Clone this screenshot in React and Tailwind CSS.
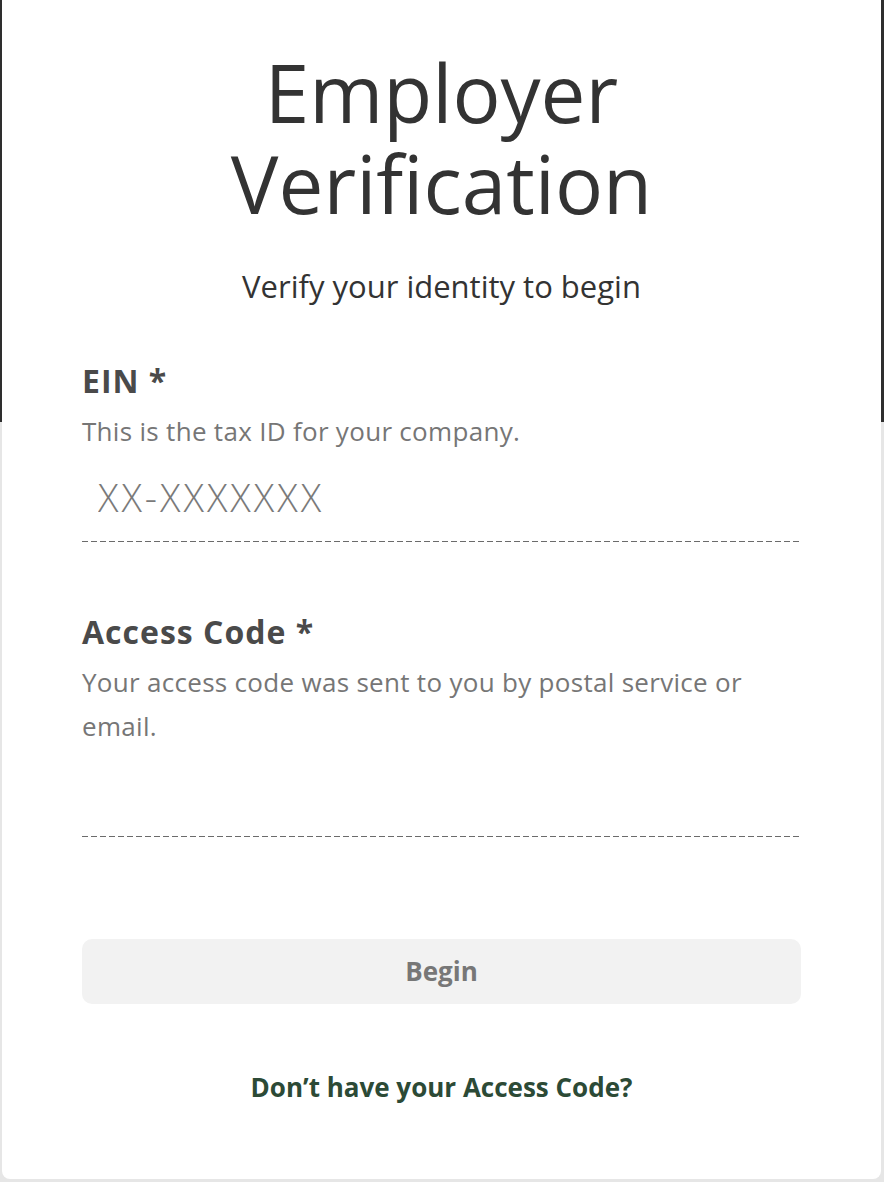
import React, { useState } from 'react';

const font = { fontFamily: '"Open Sans", "Noto Sans", sans-serif' };

const Field = ({ label, help, placeholder, value, onChange }) => (
  <div className="flex flex-col">
    <label className="text-[32px] font-bold leading-[40px] tracking-[1px] text-[#4a4a4a]">
      {label} <span>*</span>
    </label>
    <p className="mt-[8px] text-[26px] leading-[44px] tracking-[0.3px] text-[#767676]">{help}</p>
    <input
      type="text"
      value={value}
      onChange={onChange}
      placeholder={placeholder}
      className="h-[88px] w-full border-0 bg-transparent px-4 text-[38px] font-light tracking-[3px] text-[#444] outline-none placeholder:text-[#7a7a7a]"
    />
    <div className="h-px w-full bg-[repeating-linear-gradient(to_right,#6b6b6b_0,#6b6b6b_6px,transparent_6px,transparent_9px)]" />
  </div>
);

const App = () => {
  const [ein, setEin] = useState('');
  const [code, setCode] = useState('');
  const ready = ein.length > 0 && code.length > 0;

  return (
    <div
      className="flex min-h-screen flex-col bg-[linear-gradient(to_bottom,#2e2e2e_0,#2e2e2e_422px,#e6e6e6_422px)] pb-[3px] pl-[2px] pr-[3px]"
      style={font}
    >
      <div className="flex flex-1 flex-col rounded-b-lg bg-white px-[80px] pt-[46px]">
        {/* Header */}
        <h1 className="text-center text-[80px] font-normal leading-[91px] text-[#333]">
          Employer
          <br />
          Verification
        </h1>
        <p className="mt-[40px] text-center text-[31px] leading-[36px] text-[#333]">
          Verify your identity to begin
        </p>

        {/* Form */}
        <div className="mt-[57px] flex flex-col gap-[70px]">
          <Field
            label="EIN"
            help="This is the tax ID for your company."
            placeholder="XX-XXXXXXX"
            value={ein}
            onChange={(e) => setEin(e.target.value)}
          />
          <Field
            label="Access Code"
            help="Your access code was sent to you by postal service or email."
            placeholder=""
            value={code}
            onChange={(e) => setCode(e.target.value)}
          />
        </div>

        <button
          disabled={!ready}
          className="mt-[102px] h-[65px] w-full rounded-[10px] bg-[#f2f2f2] text-[26px] font-bold text-[#777]"
        >
          Begin
        </button>

        <a href="#" className="mt-[64px] text-center text-[26px] font-bold text-[#2c4a36]">
          Don’t have your Access Code?
        </a>
      </div>
    </div>
  );
};

export default App;
